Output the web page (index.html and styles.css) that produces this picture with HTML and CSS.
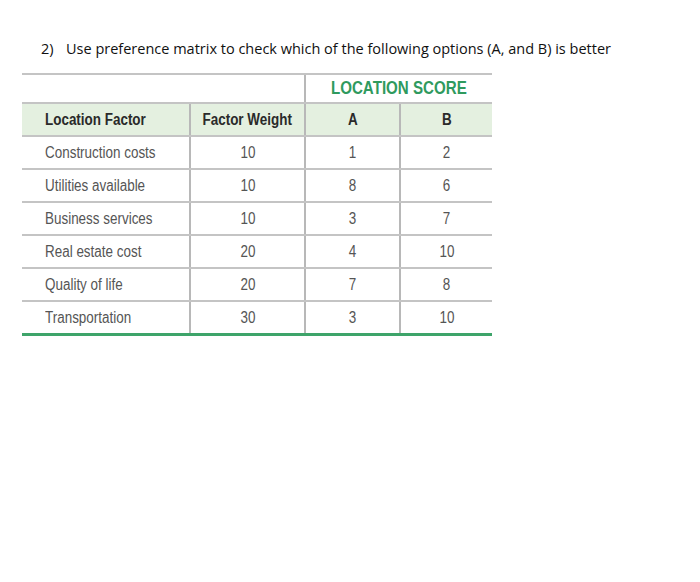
FILE: index.html
```html
<!DOCTYPE html>
<html>
<head>
<meta charset="utf-8">
<link rel="stylesheet" href="styles.css">
</head>
<body>
<p class="question"><span class="num">2)</span><span>Use preference matrix to check which of the following options (A, and B) is better</span></p>
<table class="matrix">
  <colgroup>
    <col class="c1"><col class="c2"><col class="c3"><col class="c4">
  </colgroup>
  <thead>
    <tr class="group">
      <th colspan="2" class="blank"></th>
      <th colspan="2" class="score"><span class="t">LOCATION SCORE</span></th>
    </tr>
    <tr class="heads">
      <th class="left"><span class="t">Location Factor</span></th>
      <th><span class="t">Factor Weight</span></th>
      <th><span class="t">A</span></th>
      <th><span class="t">B</span></th>
    </tr>
  </thead>
  <tbody>
    <tr><td class="left"><span class="t">Construction costs</span></td><td><span class="t">10</span></td><td><span class="t">1</span></td><td><span class="t">2</span></td></tr>
    <tr><td class="left"><span class="t">Utilities available</span></td><td><span class="t">10</span></td><td><span class="t">8</span></td><td><span class="t">6</span></td></tr>
    <tr><td class="left"><span class="t">Business services</span></td><td><span class="t">10</span></td><td><span class="t">3</span></td><td><span class="t">7</span></td></tr>
    <tr><td class="left"><span class="t">Real estate cost</span></td><td><span class="t">20</span></td><td><span class="t">4</span></td><td><span class="t">10</span></td></tr>
    <tr><td class="left"><span class="t">Quality of life</span></td><td><span class="t">20</span></td><td><span class="t">7</span></td><td><span class="t">8</span></td></tr>
    <tr><td class="left"><span class="t">Transportation</span></td><td><span class="t">30</span></td><td><span class="t">3</span></td><td><span class="t">10</span></td></tr>
  </tbody>
</table>
</body>
</html>
```
FILE: styles.css
```css
body {
  margin: 0;
  background: #ffffff;
}
.question {
  margin: 0;
  padding: 38px 0 0 41px;
  height: 22px;
  font-family: "Open Sans", "Liberation Sans", sans-serif;
  font-size: 14.5px;
  line-height: 22px;
  color: #111;
  display: flex;
}
.question .num {
  width: 25px;
}
.matrix {
  margin: 13px 0 0 22px;
  border-collapse: collapse;
  table-layout: fixed;
  width: 470px;
  font-family: "Liberation Sans", Arial, sans-serif;
  font-size: 16px;
  color: #555;
}
.c1 { width: 168px; }
.c2 { width: 115px; }
.c3 { width: 95px; }
.c4 { width: 92px; }
.matrix th, .matrix td {
  padding: 0;
  text-align: center;
  white-space: nowrap;
  border: 2px solid #c4c4c4;
  border-left: none;
  border-right: none;
}
.matrix th + th, .matrix td + td {
  border-left: 2px solid #b8b8b8;
}
.matrix .t {
  display: inline-block;
  transform: scaleX(0.84);
  transform-origin: center;
}
.matrix .left .t {
  transform-origin: left center;
}
.group th {
  height: 27px;
  border-top: 2px solid #c4c4c4;
}
.group th.score {
  font-size: 18px;
  font-weight: bold;
  color: #2f9a5e;
}
.heads th {
  height: 31px;
  background: #e4f0e0;
  color: #2a2a2a;
  font-weight: bold;
  font-size: 16px;
}
.matrix td {
  height: 31px;
}
.matrix .left {
  text-align: left;
  padding-left: 23px;
}
.matrix tbody tr:last-child td {
  border-bottom: 3px solid #3ea46a;
}
```
